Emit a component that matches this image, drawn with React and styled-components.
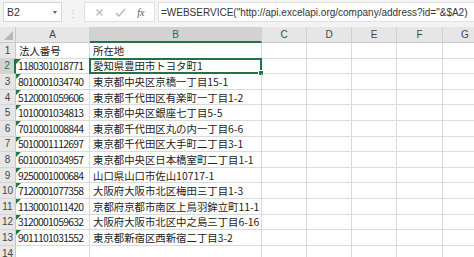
import React from 'react';
import styled, { createGlobalStyle } from 'styled-components';

const Global = createGlobalStyle`
  html, body { margin: 0; padding: 0; background: #f3f3f3; }
  body { font-family: "Noto Sans CJK JP", sans-serif; overflow: hidden; }
`;

const Page = styled.div`
  width: 474px;
  height: 257px;
  overflow: hidden;
  background: #f3f3f3;
  display: flex;
  flex-direction: column;
`;

const FormulaBar = styled.div`
  display: flex;
  align-items: stretch;
  height: 20px;
  padding: 2px 0 0 3px;
  flex: none;
`;

const NameBox = styled.div`
  width: 59px;
  background: #fff;
  border: 1px solid #d6d6d6;
  display: flex;
  align-items: center;
  justify-content: space-between;
  padding: 0 4px 0 3px;
  box-sizing: border-box;
  font-family: "Liberation Sans", sans-serif;
  font-size: 10.5px;
  color: #333;
`;

const Caret = styled.span`
  width: 0;
  height: 0;
  border-left: 2.5px solid transparent;
  border-right: 2.5px solid transparent;
  border-top: 3px solid #666;
`;

const Grip = styled.div`
  width: 22px;
  display: flex;
  align-items: center;
  justify-content: center;
  color: #b8b8b8;
  font-size: 10px;
`;

const FxBox = styled.div`
  width: 71px;
  background: #fff;
  border: 1px solid #e0e0e0;
  box-sizing: border-box;
  display: flex;
  align-items: center;
  justify-content: space-around;
  padding: 0 4px;
  color: #b0b0b0;
`;

const FxLabel = styled.span`
  font-family: "Liberation Serif", serif;
  font-style: italic;
  font-size: 10px;
  color: #555;
`;

const FormulaInput = styled.div`
  flex: 1;
  margin-left: 3px;
  background: #fff;
  border: 1px solid #e0e0e0;
  border-right: none;
  box-sizing: border-box;
  display: flex;
  align-items: center;
  padding-left: 2px;
  white-space: nowrap;
  overflow: hidden;
  font-family: "Liberation Sans", "Noto Sans CJK JP", sans-serif;
  font-size: 10px;
  color: #333;
`;

const Sheet = styled.div`
  margin-top: 5px;
  display: grid;
  grid-template-columns: 16px 74px 172px 45px 45px 45px 46px 45px;
  grid-template-rows: 16px;
  grid-auto-rows: 15.6px;
  background: #fff;
  width: 488px;
`;

const Corner = styled.div`
  background: #e6e6e6;
  border-right: 1px solid #c8c8c8;
  border-bottom: 1px solid #c8c8c8;
  box-sizing: border-box;
  position: relative;
  &::after {
    content: "";
    position: absolute;
    right: 2px;
    bottom: 2px;
    border-left: 9px solid transparent;
    border-bottom: 9px solid #b7b7b7;
  }
`;

const ColHead = styled.div`
  background: ${p => (p.$active ? '#d2d2d2' : '#e6e6e6')};
  border-right: 1px solid #cfcfcf;
  border-bottom: ${p => (p.$active ? '2px solid #217346' : '1px solid #c8c8c8')};
  box-sizing: border-box;
  display: flex;
  align-items: center;
  justify-content: center;
  font-family: "Liberation Sans", sans-serif;
  font-size: 10px;
  color: ${p => (p.$active ? '#217346' : '#444')};
`;

const RowHead = styled.div`
  background: ${p => (p.$active ? '#d2d2d2' : '#e6e6e6')};
  border-right: ${p => (p.$active ? '2px solid #217346' : '1px solid #c8c8c8')};
  border-bottom: 1px solid #d4d4d4;
  box-sizing: border-box;
  display: flex;
  align-items: center;
  justify-content: center;
  font-family: "Liberation Sans", sans-serif;
  font-size: 10px;
  color: ${p => (p.$active ? '#217346' : '#444')};
`;

const Cell = styled.div`
  position: relative;
  border-right: 1px solid #dadada;
  border-bottom: 1px solid #dadada;
  box-sizing: border-box;
  display: flex;
  align-items: center;
  padding-left: ${p => (p.$num ? '2px' : '3px')};
  white-space: nowrap;
  overflow: visible;
  font-family: "Noto Sans CJK JP", sans-serif;
  font-size: 10.4px;
  letter-spacing: ${p => (p.$num ? '-0.75px' : '0')};
  color: #222;
  z-index: ${p => (p.$over ? 1 : 0)};
  ${p => p.$flag && `
    &::before {
      content: "";
      position: absolute;
      left: 0;
      top: 0;
      border-top: 5px solid #1f7a44;
      border-right: 5px solid transparent;
    }
  `}
`;

const Active = styled.div`
  position: absolute;
  left: -1px;
  top: -1px;
  right: -1px;
  bottom: -1px;
  border: 2px solid #217346;
  pointer-events: none;
  z-index: 2;
  &::after {
    content: "";
    position: absolute;
    right: -4px;
    bottom: -4px;
    width: 4px;
    height: 4px;
    background: #217346;
    border: 1px solid #fff;
  }
`;

const cols = ['A', 'B', 'C', 'D', 'E', 'F', 'G'];

const data = [
  ['法人番号', '所在地'],
  ['1180301018771', '愛知県豊田市トヨタ町1'],
  ['8010001034740', '東京都中央区京橋一丁目15-1'],
  ['5120001059606', '東京都千代田区有楽町一丁目1-2'],
  ['1010001034813', '東京都中央区銀座七丁目5-5'],
  ['7010001008844', '東京都千代田区丸の内一丁目6-6'],
  ['5010001112697', '東京都千代田区大手町二丁目3-1'],
  ['6010001034957', '東京都中央区日本橋室町二丁目1-1'],
  ['9250001000684', '山口県山口市佐山10717-1'],
  ['7120001077358', '大阪府大阪市北区梅田三丁目1-3'],
  ['1130001011420', '京都府京都市南区上鳥羽鉾立町11-1'],
  ['3120001059632', '大阪府大阪市北区中之島三丁目6-16'],
  ['9011101031552', '東京都新宿区西新宿二丁目3-2'],
  ['', ''],
];

export default function App() {
  return (
    <Page>
      <Global />
      <FormulaBar>
        <NameBox>
          <span>B2</span>
          <Caret />
        </NameBox>
        <Grip>⋮</Grip>
        <FxBox>
          <svg width="9" height="9" viewBox="0 0 9 9">
            <path d="M1.5 1.5 L7.5 7.5 M7.5 1.5 L1.5 7.5" stroke="#b5b5b5" strokeWidth="1.1" fill="none" />
          </svg>
          <svg width="11" height="9" viewBox="0 0 11 9">
            <path d="M1 5 L4 8 L10 1" stroke="#b5b5b5" strokeWidth="1.2" fill="none" />
          </svg>
          <FxLabel>fx</FxLabel>
        </FxBox>
        <FormulaInput>=WEBSERVICE("http://api.excelapi.org/company/address?id="&amp;$A2)</FormulaInput>
      </FormulaBar>
      <Sheet>
        <Corner />
        {cols.map(c => (
          <ColHead key={c} $active={c === 'B'}>{c}</ColHead>
        ))}
        {data.map((row, i) => {
          const n = i + 1;
          return (
            <React.Fragment key={n}>
              <RowHead $active={n === 2}>{n}</RowHead>
              <Cell $num={n > 1} $flag={n >= 2 && n <= 13}>{row[0]}</Cell>
              <Cell $over>
                {row[1]}
                {n === 2 && <Active />}
              </Cell>
              {cols.slice(2).map(c => (
                <Cell key={c} />
              ))}
            </React.Fragment>
          );
        })}
      </Sheet>
    </Page>
  );
}
